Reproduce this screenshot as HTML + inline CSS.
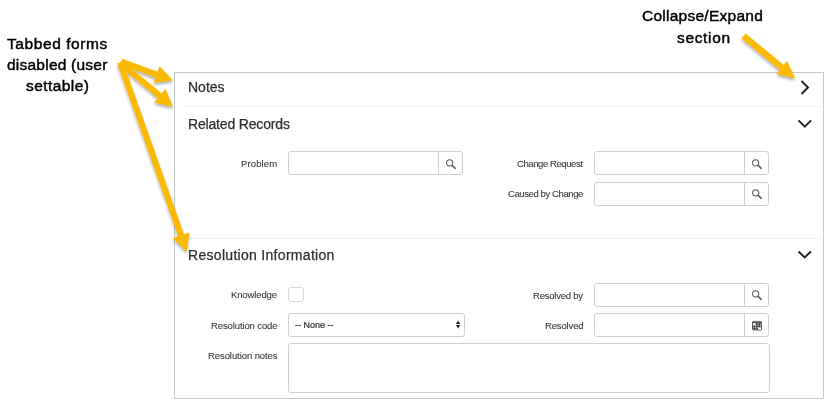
<!DOCTYPE html>
<html><head><meta charset="utf-8">
<style>
html,body{margin:0;padding:0;background:#fff;width:829px;height:407px;overflow:hidden;position:relative;font-family:"Liberation Sans",sans-serif;}
.a{position:absolute;white-space:nowrap;line-height:1;will-change:transform;}
.ann{font-size:15.5px;color:#000;-webkit-text-stroke:0.45px #000;}
.panel{position:absolute;left:174px;top:72px;width:648px;height:325px;border:1px solid #c3c9ce;}
.sep{position:absolute;height:1px;background:#eef0f2;}
.hdr{font-size:14px;color:#2e2e2e;-webkit-text-stroke:0.25px #2e2e2e;}
.lbl{font-size:9.5px;color:#3a3a3a;text-align:right;-webkit-text-stroke:0.1px #3a3a3a;}
.box{position:absolute;border:1px solid #d0d0d0;border-radius:3px;background:#fff;box-sizing:border-box;}
.btn{position:absolute;top:0;bottom:0;border-left:1px solid #d0d0d0;}
</style></head><body>

<!-- annotations -->
<div class="a ann" style="left:7.00px;top:36px;letter-spacing:0.582px">Tabbed forms</div>
<div class="a ann" style="left:7.00px;top:57px;letter-spacing:0.231px">disabled (user</div>
<div class="a ann" style="left:25.50px;top:78px;letter-spacing:0.425px">settable)</div>
<div class="a ann" style="left:642.00px;top:8px;letter-spacing:0.257px">Collapse/Expand</div>
<div class="a ann" style="left:676.50px;top:30px;letter-spacing:0.667px">section</div>

<div class="panel"></div>
<div class="sep" style="left:184px;width:637px;top:106px"></div>
<div class="sep" style="left:184px;width:637px;top:238px"></div>

<div class="a hdr" style="left:188px;top:79.5px;letter-spacing:0px">Notes</div>
<div class="a hdr" style="left:188px;top:117px;letter-spacing:-0.17px">Related Records</div>
<div class="a hdr" style="left:188px;top:248px;letter-spacing:0.3px">Resolution Information</div>

<!-- chevrons -->
<svg class="a" style="left:0;top:0;z-index:5" width="829" height="407">
  <polyline points="801.5,81 808,87.5 801.5,94" fill="none" stroke="#222" stroke-width="1.9"/>
  <polyline points="798.5,120.3 804.8,126.6 811.1,120.3" fill="none" stroke="#222" stroke-width="1.9"/>
  <polyline points="798.5,251.5 804.7,257.5 810.9,251.5" fill="none" stroke="#222" stroke-width="1.9"/>
  <circle cx="449.65" cy="162.85" r="3.1" fill="none" stroke="#5a5a5a" stroke-width="1.05"/><line x1="452.15" y1="165.35" x2="455.25" y2="168.35" stroke="#5a5a5a" stroke-width="1.5" stroke-linecap="round"/>
  <circle cx="755.65" cy="162.85" r="3.1" fill="none" stroke="#5a5a5a" stroke-width="1.05"/><line x1="758.15" y1="165.35" x2="761.25" y2="168.35" stroke="#5a5a5a" stroke-width="1.5" stroke-linecap="round"/>
  <circle cx="755.65" cy="192.85" r="3.1" fill="none" stroke="#5a5a5a" stroke-width="1.05"/><line x1="758.15" y1="195.35" x2="761.25" y2="198.35" stroke="#5a5a5a" stroke-width="1.5" stroke-linecap="round"/>
  <circle cx="755.65" cy="293.85" r="3.1" fill="none" stroke="#5a5a5a" stroke-width="1.05"/><line x1="758.15" y1="296.35" x2="761.25" y2="299.35" stroke="#5a5a5a" stroke-width="1.5" stroke-linecap="round"/>
  <g>
    <rect x="752.5" y="322" width="9" height="8" rx="1" fill="#a8a8a8" stroke="#555" stroke-width="1"/>
    <rect x="752" y="321.5" width="10" height="1.8" fill="#555"/>
    <rect x="753.9" y="320.6" width="1" height="1.2" fill="#777"/><rect x="756.4" y="320.6" width="1" height="1.2" fill="#777"/><rect x="758.9" y="320.6" width="1" height="1.2" fill="#777"/>
    <rect x="753" y="323.4" width="2.6" height="1.9" fill="#fff"/>
    <rect x="758.2" y="327.6" width="2.8" height="1.7" fill="#fff"/>
    <rect x="756.2" y="323.7" width="1.4" height="1.4" fill="#222"/><rect x="758.7" y="323.7" width="1.4" height="1.4" fill="#222"/><rect x="753.6" y="325.7" width="1.4" height="1.4" fill="#222"/><rect x="756.2" y="325.7" width="1.4" height="1.4" fill="#222"/><rect x="758.7" y="325.7" width="1.4" height="1.4" fill="#222"/><rect x="753.6" y="327.7" width="1.4" height="1.4" fill="#222"/><rect x="756.2" y="327.7" width="1.4" height="1.4" fill="#222"/>
  </g>
  <path d="M455.9,324 L458.1,320.4 L460.3,324 Z M455.9,325 L458.1,328.6 L460.3,325 Z" fill="#222"/>
</svg>

<!-- labels -->
<div class="a lbl" style="left:241.00px;top:159.1px;letter-spacing:0.133px">Problem</div>
<div class="a lbl" style="left:517.00px;top:158.9px;letter-spacing:-0.415px">Change Request</div>
<div class="a lbl" style="left:507.50px;top:189.0px;letter-spacing:-0.400px">Caused by Change</div>
<div class="a lbl" style="left:231.00px;top:290.2px;letter-spacing:-0.125px">Knowledge</div>
<div class="a lbl" style="left:210.50px;top:320.5px;letter-spacing:-0.114px">Resolution code</div>
<div class="a lbl" style="left:208.00px;top:350.6px;letter-spacing:-0.080px">Resolution notes</div>
<div class="a lbl" style="left:532.50px;top:290.5px;letter-spacing:-0.220px">Resolved by</div>
<div class="a lbl" style="left:545.00px;top:320.7px;letter-spacing:-0.143px">Resolved</div>

<!-- boxes -->
<div class="box" style="left:288px;top:151px;width:175px;height:24px"><div class="btn" style="left:149px;width:24px"></div></div>
<div class="box" style="left:594px;top:151px;width:175px;height:24px"><div class="btn" style="left:149px;width:24px"></div></div>
<div class="box" style="left:594px;top:182px;width:175px;height:24px"><div class="btn" style="left:149px;width:24px"></div></div>
<div class="box" style="left:288px;top:287px;width:16px;height:15px;border-color:#d8d8d8"></div>
<div class="box" style="left:288px;top:313px;width:177px;height:24px"></div>
<div class="a" style="left:295px;top:321px;font-size:9px;color:#2a2a2a;-webkit-text-stroke:0.2px #2a2a2a">-- None --</div>
<div class="box" style="left:288px;top:343px;width:482px;height:50px"></div>
<div class="box" style="left:594px;top:283px;width:175px;height:24px"><div class="btn" style="left:149px;width:24px"></div></div>
<div class="box" style="left:594px;top:313px;width:175px;height:24px"><div class="btn" style="left:149px;width:24px"></div></div>

<!-- arrows -->
<svg class="a" style="left:0;top:0;z-index:10" width="829" height="407">
  <defs><filter id="sh" x="-20%" y="-20%" width="140%" height="140%"><feGaussianBlur in="SourceAlpha" stdDeviation="1.5"/><feOffset dx="0" dy="2" result="b"/><feFlood flood-color="#000" flood-opacity="0.35"/><feComposite in2="b" operator="in"/><feMerge><feMergeNode/><feMergeNode in="SourceGraphic"/></feMerge></filter></defs>
  <g fill="#fbb900" filter="url(#sh)">
<polygon points="120.3,64.4 155.5,77.4 153.6,82.8 173.0,80.6 159.6,66.3 157.6,71.7 122.3,58.8"/>
<polygon points="118.2,65.0 157.8,98.0 154.2,102.4 173.2,106.9 165.4,89.0 161.7,93.4 122.1,60.4"/>
<polygon points="117.2,63.6 178.2,236.3 172.8,238.2 186.8,251.5 189.3,232.4 183.9,234.3 122.9,61.6"/>
<polygon points="741.5,38.4 779.8,69.9 776.4,74.0 795.1,78.4 787.2,60.9 783.8,65.1 745.5,33.6"/>
  </g>
</svg>
</body></html>
